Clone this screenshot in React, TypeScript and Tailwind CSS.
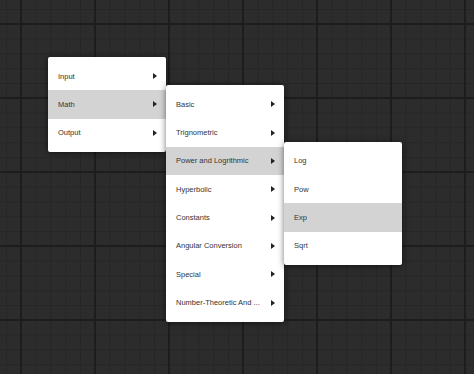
type Item = {
  label: string;
  arrow?: boolean;
  active?: boolean;
  sub?: Item[];
};

const menu: Item[] = [
  { label: "Input", arrow: true },
  {
    label: "Math",
    arrow: true,
    active: true,
    sub: [
      { label: "Basic", arrow: true },
      { label: "Trignometric", arrow: true },
      {
        label: "Power and Logrithmic",
        arrow: true,
        active: true,
        sub: [
          { label: "Log" },
          { label: "Pow" },
          { label: "Exp", active: true },
          { label: "Sqrt" },
        ],
      },
      { label: "Hyperbolic", arrow: true },
      { label: "Constants", arrow: true },
      { label: "Angular Conversion", arrow: true },
      { label: "Special", arrow: true },
      { label: "Number-Theoretic And ...", arrow: true },
    ],
  },
  { label: "Output", arrow: true },
];

const Menu = ({ items }: { items: Item[] }) => {
  return (
    <div className="w-[118px] rounded-[2px] bg-white py-[5px] shadow-[0_1px_6px_rgba(0,0,0,0.55)]">
      {items.map((item) => (
        <div
          key={item.label}
          className={`relative flex h-[28.3px] items-center justify-between pl-[10px] pr-[9px] ${
            item.active ? "bg-[#d3d3d3]" : ""
          }`}
        >
          <span className="whitespace-nowrap text-[7.5px] text-[#333]">{item.label}</span>
          {item.arrow && (
            <span className="h-0 w-0 border-y-[3px] border-l-[4px] border-y-transparent border-l-[#222]" />
          )}
          {/* open submenu */}
          {item.sub && (
            <div className="absolute left-full top-[-5px] z-10">
              <Menu items={item.sub} />
            </div>
          )}
        </div>
      ))}
    </div>
  );
};

const App = () => {
  return (
    <div className="relative h-screen w-full overflow-hidden bg-[#2c2c2c] bg-[linear-gradient(to_right,#1d1d1d_2px,transparent_2px),linear-gradient(to_bottom,#1d1d1d_2px,transparent_2px),linear-gradient(to_right,#262626_1px,transparent_1px),linear-gradient(to_bottom,#262626_1px,transparent_1px)] bg-[size:74px_74px,74px_74px,14.8px_14.8px,14.8px_14.8px] bg-[position:20px_23px,20px_23px,6px_9px,6px_9px] font-['Liberation_Sans',Arial,sans-serif]">
      <div className="absolute left-[48px] top-[57px]">
        <Menu items={menu} />
      </div>
    </div>
  );
};

export default App;
